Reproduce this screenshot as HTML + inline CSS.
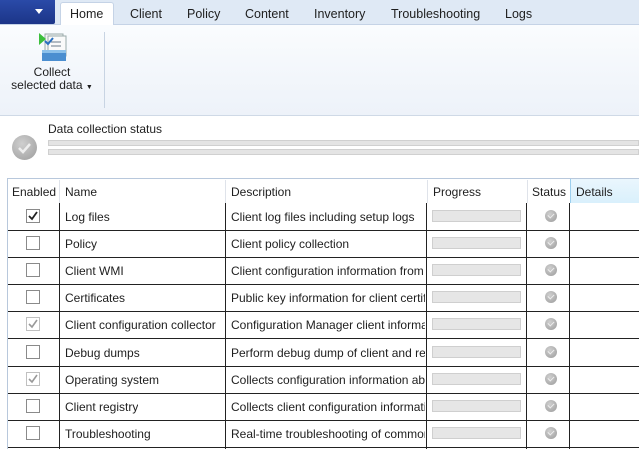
<!DOCTYPE html>
<html><head><style>
*{margin:0;padding:0;box-sizing:border-box}
body{width:639px;height:449px;overflow:hidden;background:#fff;font-family:"Liberation Sans",sans-serif;font-size:12px;color:#1e1e1e;position:relative}
.a{position:absolute}
.tab{position:absolute;top:7px;font-size:12.5px;color:#1e1e1e}
.hl{position:absolute;left:8px;width:631px;height:1px;background:#222}
.vl{position:absolute;width:1px;background:#222;top:203px;height:246px}
.hv{position:absolute;width:1px;background:#dfe3ea;top:180px;height:23px}
.cb{position:absolute;left:26px;width:14px;height:14px;border:1px solid #8a8a8a;background:#fff}
.cb.d{border-color:#c0c0c0}
.t{position:absolute;white-space:nowrap;overflow:hidden;font-size:12px}
.pb{position:absolute;left:432px;width:89px;height:12px;background:#e6e6e6;border:1px solid #cfcfcf}
.st{position:absolute;left:545px;width:12px;height:12px;border-radius:50%;background:radial-gradient(circle at 40% 35%,#d0d0d0,#9a9a9a)}
.st::after{content:"";position:absolute;left:3px;top:3px;width:5px;height:3px;border-left:1.5px solid #eee;border-bottom:1.5px solid #eee;transform:rotate(-45deg)}
</style></head><body>
<div class="a" style="left:0;top:0;width:639px;height:25px;background:#dfe9f5;border-bottom:1px solid #c5d3e6"></div>
<div class="a" style="left:0;top:0;width:55px;height:24px;background:linear-gradient(#2a4aa8,#1c3588);border-radius:0 0 2px 0"></div>
<div class="a" style="left:35px;top:9px;width:0;height:0;border-left:4px solid transparent;border-right:4px solid transparent;border-top:5px solid #fff"></div>
<div class="a" style="left:60px;top:2px;width:54px;height:24px;background:#fff;border:1px solid #c5d3e6;border-bottom:none;border-radius:3px 3px 0 0"></div>
<div class="tab" style="left:70px">Home</div>
<div class="tab" style="left:130px">Client</div>
<div class="tab" style="left:187px">Policy</div>
<div class="tab" style="left:245px">Content</div>
<div class="tab" style="left:314px">Inventory</div>
<div class="tab" style="left:391px">Troubleshooting</div>
<div class="tab" style="left:505px">Logs</div>
<div class="a" style="left:0;top:25px;width:639px;height:91px;background:linear-gradient(#fafcfe,#edf2f9);border-bottom:1px solid #cfd9e6"></div>
<div class="a" style="left:104px;top:32px;width:1px;height:76px;background:#c8d4e3"></div>
<svg class="a" style="left:37px;top:31px" width="32" height="32" viewBox="0 0 32 32">
<rect x="8" y="3" width="18" height="22" fill="#f4f4f4" stroke="#9aa" stroke-width="1"/>
<rect x="11" y="5" width="18" height="20" fill="#fafafa" stroke="#9aa"/>
<line x1="14" y1="11" x2="24" y2="11" stroke="#6a7a8a"/><line x1="14" y1="15" x2="24" y2="15" stroke="#6a7a8a"/>
<path d="M8 10l3 3 5-6" stroke="#2a6fc0" stroke-width="2" fill="none"/>
<rect x="5" y="19" width="24" height="11" fill="#4b8ed0"/><rect x="5" y="19" width="24" height="3" fill="#8cc0ea"/>
<path d="M2 2l7 6-7 6z" fill="#3cbf3c"/>
</svg>
<div class="a" style="left:0;top:66px;width:104px;text-align:center;font-size:12px;line-height:13px">Collect<br>selected data <span style="font-size:7px">▼</span></div>
<div class="a" style="left:12px;top:135px;width:25px;height:25px;border-radius:50%;background:radial-gradient(circle at 40% 35%,#cfcfcf,#9c9c9c)"></div>
<svg class="a" style="left:12px;top:135px" width="25" height="25"><path d="M7 13l4 4 7-8" stroke="#eee" stroke-width="2.5" fill="none"/></svg>
<div class="a" style="left:48px;top:122px;font-size:12px">Data collection status</div>
<div class="a" style="left:48px;top:140px;width:591px;height:6px;background:#e4e4e4;border:1px solid #d0d0d0"></div>
<div class="a" style="left:48px;top:149px;width:591px;height:6px;background:#e4e4e4;border:1px solid #d0d0d0"></div>
<div class="a" style="left:7px;top:178px;width:632px;height:1px;background:#b8c8dc"></div>
<div class="a" style="left:7px;top:178px;width:1px;height:271px;background:#b8c8dc"></div>
<div class="a" style="left:570px;top:179px;width:69px;height:24px;background:linear-gradient(#eaf6fd,#d9f0fc);border-left:1px solid #9ccfee"></div>
<div class="hv" style="left:59px"></div><div class="hv" style="left:225px"></div><div class="hv" style="left:427px"></div><div class="hv" style="left:527px"></div>
<div class="t" style="left:12px;top:185px">Enabled</div>
<div class="t" style="left:65px;top:185px">Name</div>
<div class="t" style="left:231px;top:185px">Description</div>
<div class="t" style="left:433px;top:185px">Progress</div>
<div class="t" style="left:532px;top:185px">Status</div>
<div class="t" style="left:576px;top:185px">Details</div>
<div class="vl" style="left:59px"></div><div class="vl" style="left:225px"></div><div class="vl" style="left:426px"></div><div class="vl" style="left:526px"></div><div class="vl" style="left:569px"></div>
<div class="hl" style="top:230px"></div><div class="hl" style="top:257px"></div><div class="hl" style="top:284px"></div><div class="hl" style="top:311px"></div><div class="hl" style="top:338px"></div><div class="hl" style="top:366px"></div><div class="hl" style="top:393px"></div><div class="hl" style="top:420px"></div><div class="hl" style="top:447px"></div>

<div class="cb" style="top:209px"></div><svg class="a" style="left:26px;top:209px" width="14" height="14"><path d="M3 7l3 3 5-7" stroke="#222" stroke-width="1.8" fill="none"/></svg>
<div class="cb" style="top:236px"></div>
<div class="cb" style="top:263px"></div>
<div class="cb" style="top:290px"></div>
<div class="cb d" style="top:317px"></div><svg class="a" style="left:26px;top:317px" width="14" height="14"><path d="M3 7l3 3 5-7" stroke="#999" stroke-width="1.6" fill="none"/></svg>
<div class="cb" style="top:345px"></div>
<div class="cb d" style="top:372px"></div><svg class="a" style="left:26px;top:372px" width="14" height="14"><path d="M3 7l3 3 5-7" stroke="#999" stroke-width="1.6" fill="none"/></svg>
<div class="cb" style="top:399px"></div>
<div class="cb" style="top:426px"></div>

<div class="t" style="left:65px;top:210px">Log files</div>
<div class="t" style="left:65px;top:237px">Policy</div>
<div class="t" style="left:65px;top:264px">Client WMI</div>
<div class="t" style="left:65px;top:291px">Certificates</div>
<div class="t" style="left:65px;top:318px;width:159px">Client configuration collector</div>
<div class="t" style="left:65px;top:346px">Debug dumps</div>
<div class="t" style="left:65px;top:373px">Operating system</div>
<div class="t" style="left:65px;top:400px">Client registry</div>
<div class="t" style="left:65px;top:427px">Troubleshooting</div>

<div class="t" style="left:231px;top:210px;width:194px">Client log files including setup logs</div>
<div class="t" style="left:231px;top:237px;width:194px">Client policy collection</div>
<div class="t" style="left:231px;top:264px;width:194px">Client configuration information from WMI</div>
<div class="t" style="left:231px;top:291px;width:194px">Public key information for client certificates</div>
<div class="t" style="left:231px;top:318px;width:194px">Configuration Manager client information</div>
<div class="t" style="left:231px;top:346px;width:194px">Perform debug dump of client and related</div>
<div class="t" style="left:231px;top:373px;width:194px">Collects configuration information about OS</div>
<div class="t" style="left:231px;top:400px;width:194px">Collects client configuration information</div>
<div class="t" style="left:231px;top:427px;width:194px">Real-time troubleshooting of common issues</div>

<div class="pb" style="top:210px"></div><div class="pb" style="top:237px"></div><div class="pb" style="top:264px"></div><div class="pb" style="top:291px"></div><div class="pb" style="top:318px"></div><div class="pb" style="top:346px"></div><div class="pb" style="top:373px"></div><div class="pb" style="top:400px"></div><div class="pb" style="top:427px"></div>
<div class="st" style="top:210px"></div><div class="st" style="top:237px"></div><div class="st" style="top:264px"></div><div class="st" style="top:291px"></div><div class="st" style="top:318px"></div><div class="st" style="top:346px"></div><div class="st" style="top:373px"></div><div class="st" style="top:400px"></div><div class="st" style="top:427px"></div>
</body></html>
